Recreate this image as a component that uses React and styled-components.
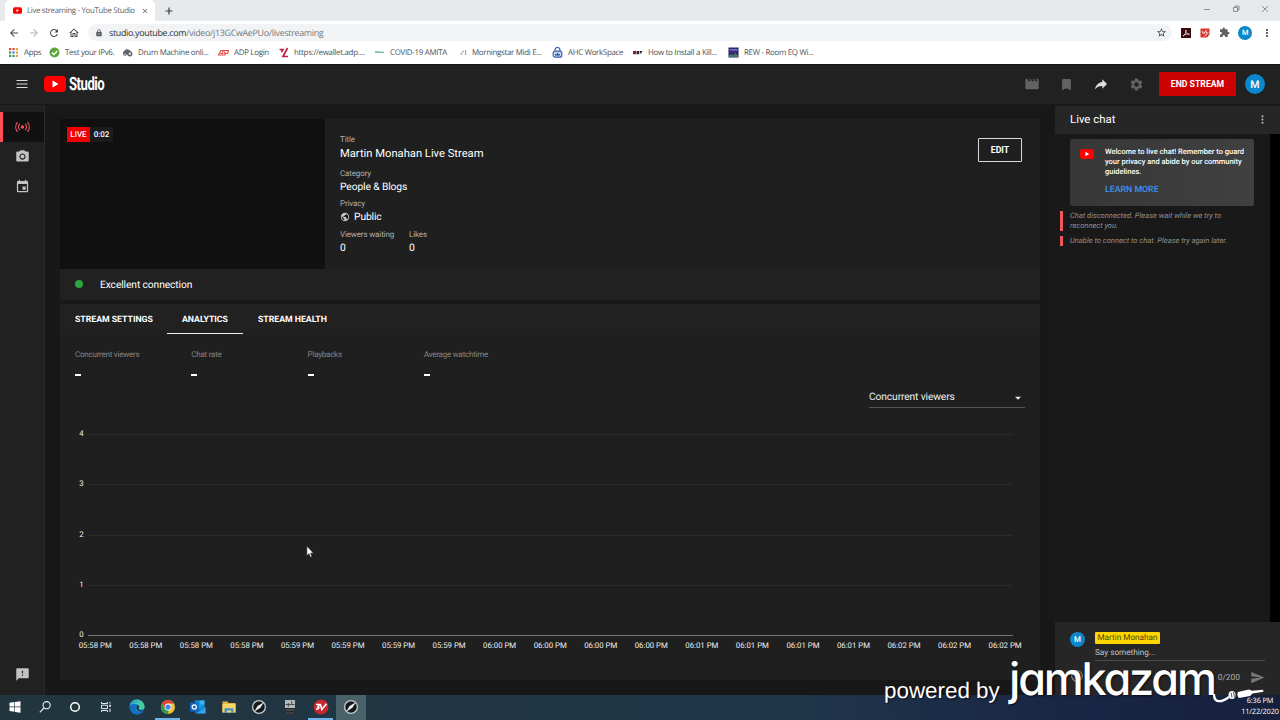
import styled, { createGlobalStyle } from "styled-components";
import {
  MdArrowBack,
  MdArrowDropDown,
  MdArrowForward,
  MdBookmark,
  MdCameraAlt,
  MdClose,
  MdEvent,
  MdExtension,
  MdFeedback,
  MdInsertEmoticon,
  MdLock,
  MdMoreVert,
  MdMovie,
  MdOutlineHome,
  MdPublic,
  MdRefresh,
  MdReply,
  MdSend,
  MdSettings,
  MdStarBorder,
} from "react-icons/md";

const GlobalStyle = createGlobalStyle`
  * { box-sizing: border-box; }
  body {
    margin: 0;
    background: #181818;
    font-family: Roboto, "Liberation Sans", sans-serif;
    text-rendering: geometricPrecision;
    overflow: hidden;
  }
  svg { display: block; flex-shrink: 0; }
`;

const Screen = styled.div`
  position: relative;
  width: 1280px;
  height: 720px;
  display: flex;
  flex-direction: column;
  overflow: hidden;
  white-space: nowrap;
`;

/* ---------- browser ---------- */

const Browser = styled.div`
  height: 65px;
  background: #fff;
  border-bottom: 1px solid #151515;
  font-family: "Open Sans", "Noto Sans", sans-serif;
  color: #5f6368;
`;

const TabStrip = styled.div`
  height: 21px;
  background: #e7eaed;
  display: flex;
  align-items: center;
  padding-left: 5px;
`;

const Tab = styled.div`
  width: 150px;
  height: 21px;
  background: #fff;
  border-radius: 5px 5px 0 0;
  display: flex;
  align-items: center;
  padding-left: 8px;
  font-size: 7.9px;
  letter-spacing: -0.34px;
`;

const TabTitle = styled.span`
  width: 114px;
  margin-left: 5px;
`;

const NewTab = styled.div`
  margin-left: 9px;
  color: #3c4043;
`;

const WindowButtons = styled.div`
  margin-left: auto;
  margin-right: 11px;
  margin-bottom: 3px;
  display: flex;
  gap: 21px;
  color: #77797c;
`;

const Toolbar = styled.div`
  height: 22px;
  display: flex;
  align-items: center;
  padding: 1px 7px 0 8px;
  color: #45494d;
`;

const NavButtons = styled.div`
  display: flex;
  gap: 8px;
  width: 80px;
`;

const Omnibox = styled.div`
  width: 1084px;
  height: 17px;
  background: #f1f3f4;
  border-radius: 9px;
  display: flex;
  align-items: center;
  padding: 0 5px 0 7px;
  font-size: 8.9px;
  color: #74787c;

  b {
    font-weight: 400;
    color: #2b2d30;
  }
`;

const Url = styled.span`
  flex: 1;
  margin-left: 6px;
  letter-spacing: -0.3px;
`;

const Extensions = styled.div`
  flex: 1;
  display: flex;
  align-items: center;
  justify-content: space-between;
  padding-left: 9px;
`;

const Bookmarks = styled.div`
  height: 19px;
  display: flex;
  align-items: center;
  padding-left: 8px;
  font-size: 7.9px;
  color: #4d5156;
`;

const Bookmark = styled.div`
  width: ${(p) => p.$width}px;
  display: flex;
  align-items: center;
  gap: 5px;
  letter-spacing: -0.29px;
`;

const Avatar = styled.div`
  width: ${(p) => p.$size}px;
  height: ${(p) => p.$size}px;
  border-radius: 50%;
  background: #0b87cb;
  color: #fff;
  display: flex;
  align-items: center;
  justify-content: center;
  font-family: Roboto, sans-serif;
  font-size: ${(p) => p.$size * 0.53}px;
  font-weight: 500;
  flex-shrink: 0;
`;

/* ---------- studio ---------- */

const Header = styled.header`
  height: 40px;
  background: #212121;
  border-bottom: 1px solid #191919;
  display: flex;
  align-items: center;
  padding: 0 15px 1px 16px;
`;

const Brand = styled.div`
  display: flex;
  align-items: center;
  gap: 3px;
  margin-left: 16px;
`;

const BrandText = styled.span`
  color: #fff;
  font-size: 18.5px;
  font-weight: 700;
  letter-spacing: -0.7px;
  width: 48px;
  transform: scaleX(0.71);
  transform-origin: left;
`;

const HeaderActions = styled.div`
  margin-left: auto;
  display: flex;
  align-items: center;
  color: #606060;
`;

const HeaderIcon = styled.div`
  width: 35px;
  display: flex;
  justify-content: center;
  color: ${(p) => (p.$bright ? "#dedede" : "#626262")};
  transform: ${(p) => (p.$flip ? "scaleX(-1)" : "none")};
`;

const EndButton = styled.button`
  width: 77px;
  height: 24px;
  margin: 0 9px 0 5px;
  padding: 0 0 1px;
  border: 0;
  background: #cc0000;
  color: #fff;
  font: 700 8.7px Roboto, sans-serif;
`;

const Body = styled.div`
  height: 590px;
  display: flex;
  background: #181818;
`;

const Sidebar = styled.nav`
  width: 45px;
  border-right: 1px solid #2b2b2b;
  background: #212121;
  display: flex;
  flex-direction: column;
  padding-top: 7px;
`;

const SideItem = styled.div`
  height: 30px;
  display: flex;
  align-items: center;
  justify-content: center;
  color: ${(p) => (p.$active ? "#f4515c" : "#c3c3c3")};
  background: ${(p) => (p.$active ? "#111" : "transparent")};
  border-left: 3px solid ${(p) => (p.$active ? "#ff4e59" : "transparent")};
  padding: 0 2px 1px 0;
  margin-top: ${(p) => (p.$last ? "auto" : 0)};
  margin-bottom: ${(p) => (p.$last ? "5px" : 0)};
`;

const Main = styled.main`
  width: 1010px;
  padding: 14px 15px 0;
  display: flex;
  flex-direction: column;
  gap: 4px;
`;

const Card = styled.section`
  background: #1f1f1f;
  height: ${(p) => p.$height}px;
`;

const StreamInfo = styled.div`
  height: 150px;
  display: flex;
`;

const Preview = styled.div`
  width: 265px;
  background: #101010;
  padding: 8px 7px;
  display: flex;
  align-items: flex-start;
`;

const LiveBadge = styled.span`
  width: ${(p) => p.$width}px;
  height: 15px;
  background: ${(p) => (p.$red ? "#ee0000" : "#1b1b1b")};
  color: #fff;
  font-size: 8px;
  font-weight: 500;
  line-height: 15px;
  text-align: center;
`;

const Details = styled.div`
  flex: 1;
  padding: 15px 0 0 15px;
`;

const Label = styled.div`
  font-size: 8px;
  line-height: 12px;
  letter-spacing: -0.14px;
  color: #b0b0b0;
`;

const Value = styled.div`
  height: ${(p) => p.$height}px;
  color: #fff;
  font-size: ${(p) => (p.$title ? 11.2 : 10.3)}px;
  line-height: ${(p) => (p.$title ? 16 : 14)}px;
  letter-spacing: ${(p) => (p.$title ? 0 : -0.12)}px;
  display: flex;
  align-items: flex-start;
  gap: 4px;

  svg {
    margin-top: 2px;
  }
`;

const Counts = styled.div`
  display: flex;
  gap: 15px;
`;

const EditButton = styled.button`
  width: 44px;
  height: 24px;
  margin: 19px 18px 0 0;
  padding: 0 0 1px;
  border: 1px solid #d8d8d8;
  border-radius: 1px;
  background: none;
  color: #fff;
  font: 700 8.7px Roboto, sans-serif;
`;

const Connection = styled.div`
  height: 30px;
  background: #212121;
  color: #fff;
  font-size: 10.3px;
  letter-spacing: -0.12px;
  display: flex;
  align-items: center;
  gap: 17px;
  padding-left: 15px;
`;

const Dot = styled.span`
  width: 8px;
  height: 8px;
  border-radius: 50%;
  background: #2ba640;
`;

const Tabs = styled.div`
  height: 30px;
  background: #212121;
  display: flex;
`;

const TabLabel = styled.div`
  height: 30px;
  padding: 0 15px;
  width: ${(p) => p.$width}px;
  line-height: 32px;
  font-size: 8.75px;
  font-weight: 700;
  letter-spacing: -0.04px;
  color: #fff;
  border-bottom: ${(p) => (p.$active ? "1px solid #eee" : "0")};
`;

const Metrics = styled.div`
  display: flex;
  padding: 15px 15px 0;
  height: 55px;
`;

const Metric = styled.div`
  width: 116.3px;
  font-size: 8px;
  line-height: 12px;
  letter-spacing: -0.23px;
  color: #858585;
`;

const Dash = styled.div`
  width: 6px;
  height: 2px;
  margin-top: 13px;
  background: #fff;
`;

const Select = styled.div`
  width: 156px;
  height: 19px;
  margin: 0 15px 0 auto;
  border-bottom: 1px solid #555;
  color: #eee;
  font-size: 10.3px;
  letter-spacing: -0.14px;
  display: flex;
  align-items: center;
  justify-content: space-between;
  padding-bottom: 3px;

  svg {
    margin-top: 2px;
  }
`;

const Chart = styled.div`
  padding: 19px 27px 0 18px;
  color: #f2f2f2;
  font-size: 7.8px;
`;

const GridRow = styled.div`
  height: ${(p) => (p.$base ? 14 : 50.3)}px;
  display: flex;
  align-items: flex-start;
  gap: 3px;
  line-height: 14px;

  span {
    width: 7px;
    text-align: center;
  }

  &::after {
    content: "";
    flex: 1;
    height: 1px;
    margin-top: 7px;
    background: ${(p) => (p.$base ? "#757575" : "#2b2b2b")};
  }
`;

const Times = styled.div`
  display: grid;
  grid-template-columns: repeat(19, 50.55px);
  margin: -3px 0 0 -8px;
  text-align: center;
  line-height: 13px;
`;

/* ---------- chat ---------- */

const Chat = styled.aside`
  width: 225px;
  padding-top: 1px;
  display: flex;
  flex-direction: column;
`;

const ChatHeader = styled.div`
  height: 28px;
  background: #262626;
  color: #fff;
  font-size: 11.4px;
  display: flex;
  align-items: center;
  justify-content: space-between;
  padding: 0 11px 2px 15px;
`;

const ChatBody = styled.div`
  flex: 1;
  background: #191919;
  border-right: 10px solid #000;
  padding: 5px 0 0 5px;
`;

const Welcome = styled.div`
  width: 184px;
  height: 67px;
  margin: 0 0 5px 10px;
  border-radius: 2px;
  background: linear-gradient(90deg, #373737, #404040);
  display: flex;
  gap: 11px;
  padding: 8px 10px;
  color: #fff;
  font-size: 7.5px;
  line-height: 10px;
`;

const WelcomeText = styled.div`
  font-weight: 500;
  letter-spacing: -0.02px;
`;

const LearnMore = styled.div`
  margin-top: 8px;
  font-size: 8.8px;
  font-weight: 500;
  color: #3d95f0;
`;

const Notice = styled.div`
  border-left: 3px solid #f1565a;
  padding-left: 7px;
  margin-bottom: 5px;
  color: #909090;
  font-size: 7.57px;
  font-style: italic;
  line-height: 10px;
`;

const ChatInput = styled.div`
  height: 73px;
  background: #262626;
  display: flex;
  gap: 10px;
  padding: 10px 15px 0 15px;
`;

const InputColumn = styled.div`
  flex: 1;
`;

const Author = styled.div`
  width: 65px;
  height: 12px;
  background: #ffd600;
  color: #4d4300;
  border-radius: 1px;
  text-align: center;
  font-size: 8.2px;
  line-height: 13px;
`;

const Placeholder = styled.div`
  height: 17px;
  border-bottom: 1px solid #4c4c4c;
  color: #c5c5c5;
  font-size: 8.2px;
  line-height: 19px;
`;

const InputFooter = styled.div`
  display: flex;
  align-items: center;
  justify-content: flex-end;
  gap: 10px;
  height: 33px;
  color: #aaa;
  font-size: 8.4px;
`;

const InputSide = styled.div`
  display: flex;
  flex-direction: column;
  gap: 22px;
  color: #8d8d8d;
`;

/* ---------- taskbar ---------- */

const Taskbar = styled.footer`
  height: 25px;
  background: linear-gradient(90deg, #21353d, #20374a 60%, #182544 85%, #15213c);
  display: flex;
`;

const TaskItem = styled.div`
  width: ${(p) => p.$width}px;
  display: flex;
  flex-direction: column;
  align-items: center;
  justify-content: space-between;
  padding-top: 4px;
  background: ${(p) => (p.$active ? "#49626a" : "transparent")};

  &::after {
    content: "";
    width: 25px;
    height: 2px;
    background: ${(p) => (p.$running ? "#6fb2ec" : "transparent")};
  }
`;

const Clock = styled.div`
  margin-left: auto;
  width: 40px;
  color: #fff;
  text-align: center;
  font: 7.4px/11px "Open Sans", "Noto Sans", sans-serif;
  padding-top: 1px;
  letter-spacing: -0.15px;
`;

/* The sponsor mark floats over both the studio page and the taskbar. */
const Watermark = styled.div`
  position: absolute;
  left: 884px;
  top: 651px;
  display: flex;
  color: #fff;
  text-shadow: 1px 1px 2px rgba(0, 0, 0, 0.7);
`;

const PoweredBy = styled.span`
  width: 125px;
  padding-top: 27px;
  font: 22.4px/26px "Liberation Sans", Arial, sans-serif;
`;

const Wordmark = styled.span`
  width: 204px;
  font: 500 45px/56px Inter, Lato, sans-serif;
  font-feature-settings: "cv11" 1;
  letter-spacing: -2.2px;
`;

const Cable = styled.svg`
  margin-top: 34px;
`;

const Pointer = styled.svg`
  position: absolute;
  left: 306px;
  top: 545px;
`;

function PlayLogo({ width = 21, height = 15 }) {
  return (
    <svg width={width} height={height} viewBox="0 0 22 16">
      <rect width="22" height="16" rx="4" fill="#f00" />
      <path d="M8.5 4.6v6.8l6-3.4z" fill="#fff" />
    </svg>
  );
}

const bookmarks = [
  {
    label: "Apps", width: 41,
    icon: (
      <g>
        {["#d94a3d", "#d94a3d", "#e6a23a", "#3f9e5c", "#4a7fd6", "#e6a23a", "#3f9e5c", "#3f9e5c", "#e6a23a"].map((c, i) => (
          <rect key={i} x={1 + (i % 3) * 3.4} y={1 + Math.floor(i / 3) * 3.4} width="2.2" height="2.2" fill={c} />
        ))}
      </g>
    ),
  },
  {
    label: "Test your IPv6.", width: 73,
    icon: (
      <g>
        <circle cx="5.5" cy="5.5" r="5" fill="#5fa83a" />
        <path d="M3 5.6l1.9 1.9L8.3 4" fill="none" stroke="#fff" strokeWidth="1.5" />
      </g>
    ),
  },
  {
    label: "Drum Machine onli...", width: 96,
    icon: (
      <g fill="#60656b">
        <path d="M1 5l3.5-3 4 1.500-1 3-4 2-2.500-1z" />
        <circle cx="7.8" cy="6.8" r="2.6" />
        <circle cx="7.8" cy="6.8" r="1.2" fill="#ddd" />
        <circle cx="2.8" cy="7.5" r="1.5" fill="#999" />
      </g>
    ),
  },
  {
    label: "ADP Login", width: 60,
    icon: (
      <g fill="none" stroke="#e2473d">
        <path d="M.5 7.8L3 3.5h7.5l-.8 3H7.5l-.6 1.5H.5zM2.5 6.5h2L5 4M7 4.5l-.8 2" strokeWidth="1.1" />
      </g>
    ),
  },
  {
    label: "https://ewallet.adp....", width: 96,
    icon: (
      <g fill="none" stroke="#bd2445">
        <path d="M1.500 2.500h3.500L3.500 5M9.500 1L5 9.500h5" strokeWidth="1.7" />
      </g>
    ),
  },
  {
    label: "COVID-19 AMITA", width: 82,
    icon: <path d="M1 5h4.5c1 0 2 .8 4.5.2" fill="none" stroke="#68b6ad" strokeWidth="1.3" />,
  },
  {
    label: "Morningstar Midi E...", width: 96,
    icon: <path d="M5 8c0-2 1.2-3.8 3-3.8M9.7 3v5" fill="none" stroke="#8f8f8f" />,
  },
  {
    label: "AHC WorkSpace", width: 80,
    icon: (
      <g fill="none" stroke="#3863a8">
        <path d="M3 4.5V3a2.5 2.5 0 015 0v1.5" strokeWidth="1.2" />
        <rect x="1.2" y="4.2" width="8.6" height="6" rx="2" fill="#ccdaf0" strokeWidth="1.2" />
        <path d="M3 7.8h5M5.5 5.8v3" strokeWidth="1.4" />
      </g>
    ),
  },
  {
    label: "How to Install a Kill...", width: 96,
    icon: (
      <g>
        <path d="M1 4h3.4v3.2H1z" fill="#7d2630" />
        <path d="M4.8 4h2.4v3.2H4.8zM7.6 4l1.2 3.2L10.4 4z" fill="#2d2630" />
      </g>
    ),
  },
  {
    label: "REW - Room EQ Wi...", width: 90,
    icon: (
      <g>
        <rect x=".5" y=".5" width="10" height="10" fill="#241a66" />
        <path d="M1.5 2h8v1.6h-8z" fill="#7382b9" />
        <path d="M1 8l2-1 2 1 2-2 3 2v2H1z" fill="#3e7a58" />
        <path d="M1 5h9M4 1v9M7 1v9" stroke="#6652a0" strokeWidth=".5" />
      </g>
    ),
  },
];

const times = [
  "05:58", "05:58", "05:58", "05:58", "05:59", "05:59", "05:59", "05:59",
  "06:00", "06:00", "06:00", "06:00", "06:01", "06:01", "06:01", "06:01",
  "06:02", "06:02", "06:02",
];

const compass = (
  <g>
    <circle cx="8" cy="8" r="6.4" fill="#15191c" stroke="#c9cdce" strokeWidth="1.3" />
    <path d="M13 3.200L9.300 8.800 3.200 12.800 6.600 7z" fill="#f2f4f4" />
  </g>
);

const tasks = [
  {
    width: 30,
    icon: <path d="M2.500 3.800l4.900-.7v4.500H2.500zM8 3l5.500-.8v5.400H8zM2.500 8.300h4.900v4.500l-4.900-.7zM8 8.300h5.500v5.400L8 12.900z" fill="#fff" />,
  },
  {
    width: 30,
    icon: (
      <g fill="none" stroke="#e8eced" strokeWidth="1.1">
        <circle cx="9.6" cy="6.2" r="3.6" />
        <path d="M7 9l-4.2 4.3" />
      </g>
    ),
  },
  { width: 30, icon: <circle cx="8" cy="8" r="4.3" fill="none" stroke="#fff" strokeWidth="1.5" /> },
  {
    width: 31,
    icon: (
      <g fill="none" stroke="#e8eced">
        <path d="M3.5 3v1.5h6V3M3.5 13v-1.5h6V13M3.5 6.2h6v3.4h-6zM12 3v1.5M12 9.5V13" />
        <path d="M11.3 5.7h1.6v2h-1.6z" fill="#fff" stroke="none" />
      </g>
    ),
  },
  {
    width: 31.5,
    icon: (
      <g>
        <circle cx="8" cy="8" r="7.5" fill="#1388d2" />
        <path d="M1 6C2.5.5 8-.8 12 1.8c3 2 4 5 3.4 7.2-1.3 2-4.6 2-6 .8 1.4-1.2.8-4.3-2-4.8C4.8 4.6 2.5 5 1 6z" fill="#45cba0" />
        <path d="M.5 7C1.500 1.500 7 0 11 3.500 7 2.500 3.500 4 .5 7z" fill="#2aa7dd" />
        <path d="M.6 7C3 4 8 4.5 8.6 7.5 5.5 7.5 5.5 12 10 12.8c2 .4 3.7-.2 4.5-.8C11 17.5 1.2 16.5.6 7z" fill="#1670c0" />
        <path d="M9.5 9.8c1.4-1.2.5-3.5-.9-3.8-1.6 1-1.7 5 1.8 6.2 1.8.6 4 .3 5.200-1.200-2 .9-5.700.7-6.100-1.200z" fill="#203943" />
      </g>
    ),
  },
  {
    width: 30.5, running: true,
    icon: (
      <g>
        <circle cx="8" cy="8" r="7" fill="#f2c230" />
        <path d="M1.94 4.5L5 9.7h4L8 15A7 7 0 011.94 4.5z" fill="#2d9d50" />
        <path d="M1.94 4.5A7 7 0 0114.06 4.5H8L5 9.5z" fill="#e34133" />
        <circle cx="8" cy="8" r="3.4" fill="#fff" />
        <circle cx="8" cy="8" r="2.6" fill="#4384ef" />
      </g>
    ),
  },
  {
    width: 30.5,
    icon: (
      <g>
        <path d="M5 1.5h9.5v12H5z" fill="#1490df" />
        <path d="M9.7 1.5h4.8v4H9.7z" fill="#39b6f2" />
        <path d="M5 8l5 3 5.5-3v6.5H5z" fill="#1266b7" />
        <path d="M15.5 8v6.5H6z" fill="#2fa5e8" />
        <rect x="0" y="3.5" width="8.5" height="9" rx=".7" fill="#0f6abf" />
        <circle cx="4.25" cy="8" r="2.1" fill="none" stroke="#fff" strokeWidth="1.2" />
      </g>
    ),
  },
  {
    width: 30.5,
    icon: (
      <g>
        <path d="M1.5 2.5h5l1 1.5h7v9.5h-13z" fill="#e8b540" />
        <path d="M1.5 5h13v8.5h-13z" fill="#f9d667" />
        <path d="M3.5 9.2h9V14h-2.3v-2.400H5.8V14H3.5z" fill="#4795c7" />
      </g>
    ),
  },
  { width: 30.5, icon: compass },
  {
    width: 31,
    icon: (
      <g>
        <rect x="3" y="1" width="10" height="14" rx="1" fill="#24282b" />
        <rect x="3" y="1" width="10" height="8" fill="#b4babc" />
        <path d="M3.500 5.500h9M6.300 4v4M9.700 2v3.500" stroke="#32383b" strokeWidth=".8" />
        <path d="M3.500 11h9" stroke="#777" strokeWidth=".8" />
        <path d="M4 14h8" stroke="#666" strokeWidth=".8" />
      </g>
    ),
  },
  {
    width: 30.5, running: true,
    icon: (
      <g>
        <circle cx="8" cy="8" r="7.5" fill="#c62731" />
        <path d="M3 5.5h3.500L5 8c1.600.2 1.200 2.300-2 2.200M7.500 5.500l1.300 5L13.500 4.800" fill="none" stroke="#fff" strokeWidth="1.6" />
      </g>
    ),
  },
  { width: 30, active: true, icon: compass },
];

function BrowserChrome() {
  return (
    <Browser>
      <TabStrip>
        <Tab>
          <PlayLogo width={9} height={7} />
          <TabTitle>Live streaming - YouTube Studio</TabTitle>
          <MdClose size={8} />
        </Tab>
        <NewTab>
          <svg width="10" height="10" viewBox="0 0 10 10">
            <path d="M5 1.5v7M1.5 5h7" stroke="currentColor" strokeWidth="1.2" />
          </svg>
        </NewTab>
        <WindowButtons>
          <svg width="8" height="8" viewBox="0 0 8 8"><path d="M1 4.5h6" stroke="currentColor" strokeWidth=".8" /></svg>
          <svg width="8" height="8" viewBox="0 0 8 8" fill="none" stroke="currentColor">
            <path d="M1.5 2.5h4v4h-4zM3 2.5V1h4v4H5.5" strokeWidth=".8" />
          </svg>
          <svg width="8" height="8" viewBox="0 0 8 8"><path d="M1 1l6 6M7 1L1 7" stroke="currentColor" strokeWidth=".8" /></svg>
        </WindowButtons>
      </TabStrip>
      <Toolbar>
        <NavButtons>
          <MdArrowBack size={12} />
          <MdArrowForward size={12} color="#b4b7ba" />
          <MdRefresh size={12} />
          <MdOutlineHome size={12} />
        </NavButtons>
        <Omnibox>
          <MdLock size={8} color="#55595d" />
          <Url><b>studio.youtube.com</b>/video/j13GCwAePUo/livestreaming</Url>
          <MdStarBorder size={11} color="#45494d" />
        </Omnibox>
        <Extensions>
          <svg width="10" height="10" viewBox="0 0 10 10">
            <rect width="10" height="10" fill="#3c0b10" />
            <path d="M2 8c2-1 3.5-4 3-6C4 4 6 6.5 8.5 6.2 6 5.5 3.5 6.5 2 8z" fill="none" stroke="#fff" strokeWidth=".7" />
          </svg>
          <svg width="10" height="10" viewBox="0 0 10 10">
            <path d="M.5.5h9v6L7 9.5H.5z" fill="#d8352e" />
            <path d="M2 3l1.5 3L5 3.5M6 2v3h2.5M4.5 8L7 6" fill="none" stroke="#fff" strokeWidth=".9" />
          </svg>
          <MdExtension size={11} color="#5f6368" />
          <Avatar $size={14}>M</Avatar>
          <MdMoreVert size={12} />
        </Extensions>
      </Toolbar>
      <Bookmarks>
        {bookmarks.map((b) => (
          <Bookmark key={b.label} $width={b.width}>
            <svg width="11" height="11" viewBox="0 0 11 11">{b.icon}</svg>
            {b.label}
          </Bookmark>
        ))}
      </Bookmarks>
    </Browser>
  );
}

function StreamCard() {
  return (
    <Card $height={181}>
      <StreamInfo>
        <Preview>
          <LiveBadge $red $width={23}>LIVE</LiveBadge>
          <LiveBadge $width={23}>0:02</LiveBadge>
        </Preview>
        <Details>
          <Label>Title</Label>
          <Value $title $height={22}>Martin Monahan Live Stream</Value>
          <Label>Category</Label>
          <Value $height={18}>People &amp; Blogs</Value>
          <Label>Privacy</Label>
          <Value $height={19}>
            <MdPublic size={10} color="#c8c8c8" />
            Public
          </Value>
          <Counts>
            <div>
              <Label>Viewers waiting</Label>
              <Value $height={13}>0</Value>
            </div>
            <div>
              <Label>Likes</Label>
              <Value $height={13}>0</Value>
            </div>
          </Counts>
        </Details>
        <EditButton>EDIT</EditButton>
      </StreamInfo>
      <Connection>
        <Dot />
        Excellent connection
      </Connection>
    </Card>
  );
}

function AnalyticsCard() {
  return (
    <Card $height={376}>
      <Tabs>
        <TabLabel $width={107}>STREAM SETTINGS</TabLabel>
        <TabLabel $width={76} $active>ANALYTICS</TabLabel>
        <TabLabel $width={100}>STREAM HEALTH</TabLabel>
      </Tabs>
      <Metrics>
        {["Concurrent viewers", "Chat rate", "Playbacks", "Average watchtime"].map((name) => (
          <Metric key={name}>
            {name}
            <Dash />
          </Metric>
        ))}
      </Metrics>
      <Select>
        Concurrent viewers
        <MdArrowDropDown size={14} />
      </Select>
      <Chart>
        {[4, 3, 2, 1, 0].map((n) => (
          <GridRow key={n} $base={n === 0}>
            <span>{n}</span>
          </GridRow>
        ))}
        <Times>
          {times.map((t, i) => (
            <span key={i}>{t} PM</span>
          ))}
        </Times>
      </Chart>
    </Card>
  );
}

function LiveChat() {
  return (
    <Chat>
      <ChatHeader>
        Live chat
        <MdMoreVert size={13} color="#aaa" />
      </ChatHeader>
      <ChatBody>
        <Welcome>
          <PlayLogo width={14} height={14} />
          <WelcomeText>
            Welcome to live chat! Remember to guard
            <br />
            your privacy and abide by our community
            <br />
            guidelines.
            <LearnMore>LEARN MORE</LearnMore>
          </WelcomeText>
        </Welcome>
        <Notice>
          Chat disconnected. Please wait while we try to
          <br />
          reconnect you.
        </Notice>
        <Notice>Unable to connect to chat. Please try again later.</Notice>
      </ChatBody>
      <ChatInput>
        <InputSide>
          <Avatar $size={15}>M</Avatar>
          <MdInsertEmoticon size={14} />
        </InputSide>
        <InputColumn>
          <Author>Martin Monahan</Author>
          <Placeholder>Say something...</Placeholder>
          <InputFooter>
            0/200
            <MdSend size={15} color="#777" />
          </InputFooter>
        </InputColumn>
      </ChatInput>
    </Chat>
  );
}

export default function App() {
  return (
    <Screen>
      <GlobalStyle />
      <BrowserChrome />
      <Header>
        <svg width="12" height="10" viewBox="0 0 12 10">
          <path d="M.5 1.5h11M.5 5h11M.5 8.5h11" stroke="#ddd" />
        </svg>
        <Brand>
          <PlayLogo width={22} height={16} />
          <BrandText>Studio</BrandText>
        </Brand>
        <HeaderActions>
          <HeaderIcon><MdMovie size={16} /></HeaderIcon>
          <HeaderIcon><MdBookmark size={15} /></HeaderIcon>
          <HeaderIcon $bright $flip><MdReply size={16} /></HeaderIcon>
          <HeaderIcon><MdSettings size={15} /></HeaderIcon>
          <EndButton>END STREAM</EndButton>
          <Avatar $size={20}>M</Avatar>
        </HeaderActions>
      </Header>
      <Body>
        <Sidebar>
          <SideItem $active>
            <svg width="15" height="12" viewBox="0 0 15 12" fill="none" stroke="currentColor" strokeWidth="1.2">
              <circle cx="7.5" cy="6" r="1.7" fill="currentColor" stroke="none" />
              <path d="M4.8 3a4.3 4.3 0 000 6M10.2 3a4.3 4.3 0 010 6M2.5 1.2a7.5 7.5 0 000 9.6M12.5 1.2a7.5 7.5 0 010 9.6" />
            </svg>
          </SideItem>
          <SideItem><MdCameraAlt size={15} /></SideItem>
          <SideItem><MdEvent size={15} /></SideItem>
          <SideItem $last><MdFeedback size={15} /></SideItem>
        </Sidebar>
        <Main>
          <StreamCard />
          <AnalyticsCard />
        </Main>
        <LiveChat />
      </Body>
      <Taskbar>
        {tasks.map((t, i) => (
          <TaskItem key={i} $width={t.width} $running={t.running} $active={t.active}>
            <svg width="16" height="16" viewBox="0 0 16 16">{t.icon}</svg>
          </TaskItem>
        ))}
        <Clock>
          6:36 PM
          <br />
          11/22/2020
        </Clock>
      </Taskbar>
      <Pointer width="8" height="13" viewBox="0 0 8 13">
        <path d="M.8 1v9.7l2.2-2 1.5 3.5 1.6-.7-1.5-3.3h3z" fill="#fff" stroke="#111" strokeWidth=".6" />
      </Pointer>
      <Watermark>
        <PoweredBy>powered by</PoweredBy>
        <Wordmark>jamkazam</Wordmark>
        <Cable width="54" height="24" viewBox="0 0 54 24">
          <path d="M1 9c0 9 7 9 15 3" fill="none" stroke="#fff" strokeWidth="2.2" />
          <ellipse cx="19" cy="10" rx="3.500" ry="4" fill="#fff" />
          <path d="M18 7.500l1 5M20.500 7l1 5.500" stroke="#26303f" strokeWidth=".8" />
          <path d="M25 7l11-2.500 3 1.200 11-1 .5 2-11 1.800-2.500 2.500-11 2c-1.800-1.500-2-4.500-1-6z" fill="#fff" />
        </Cable>
      </Watermark>
    </Screen>
  );
}
